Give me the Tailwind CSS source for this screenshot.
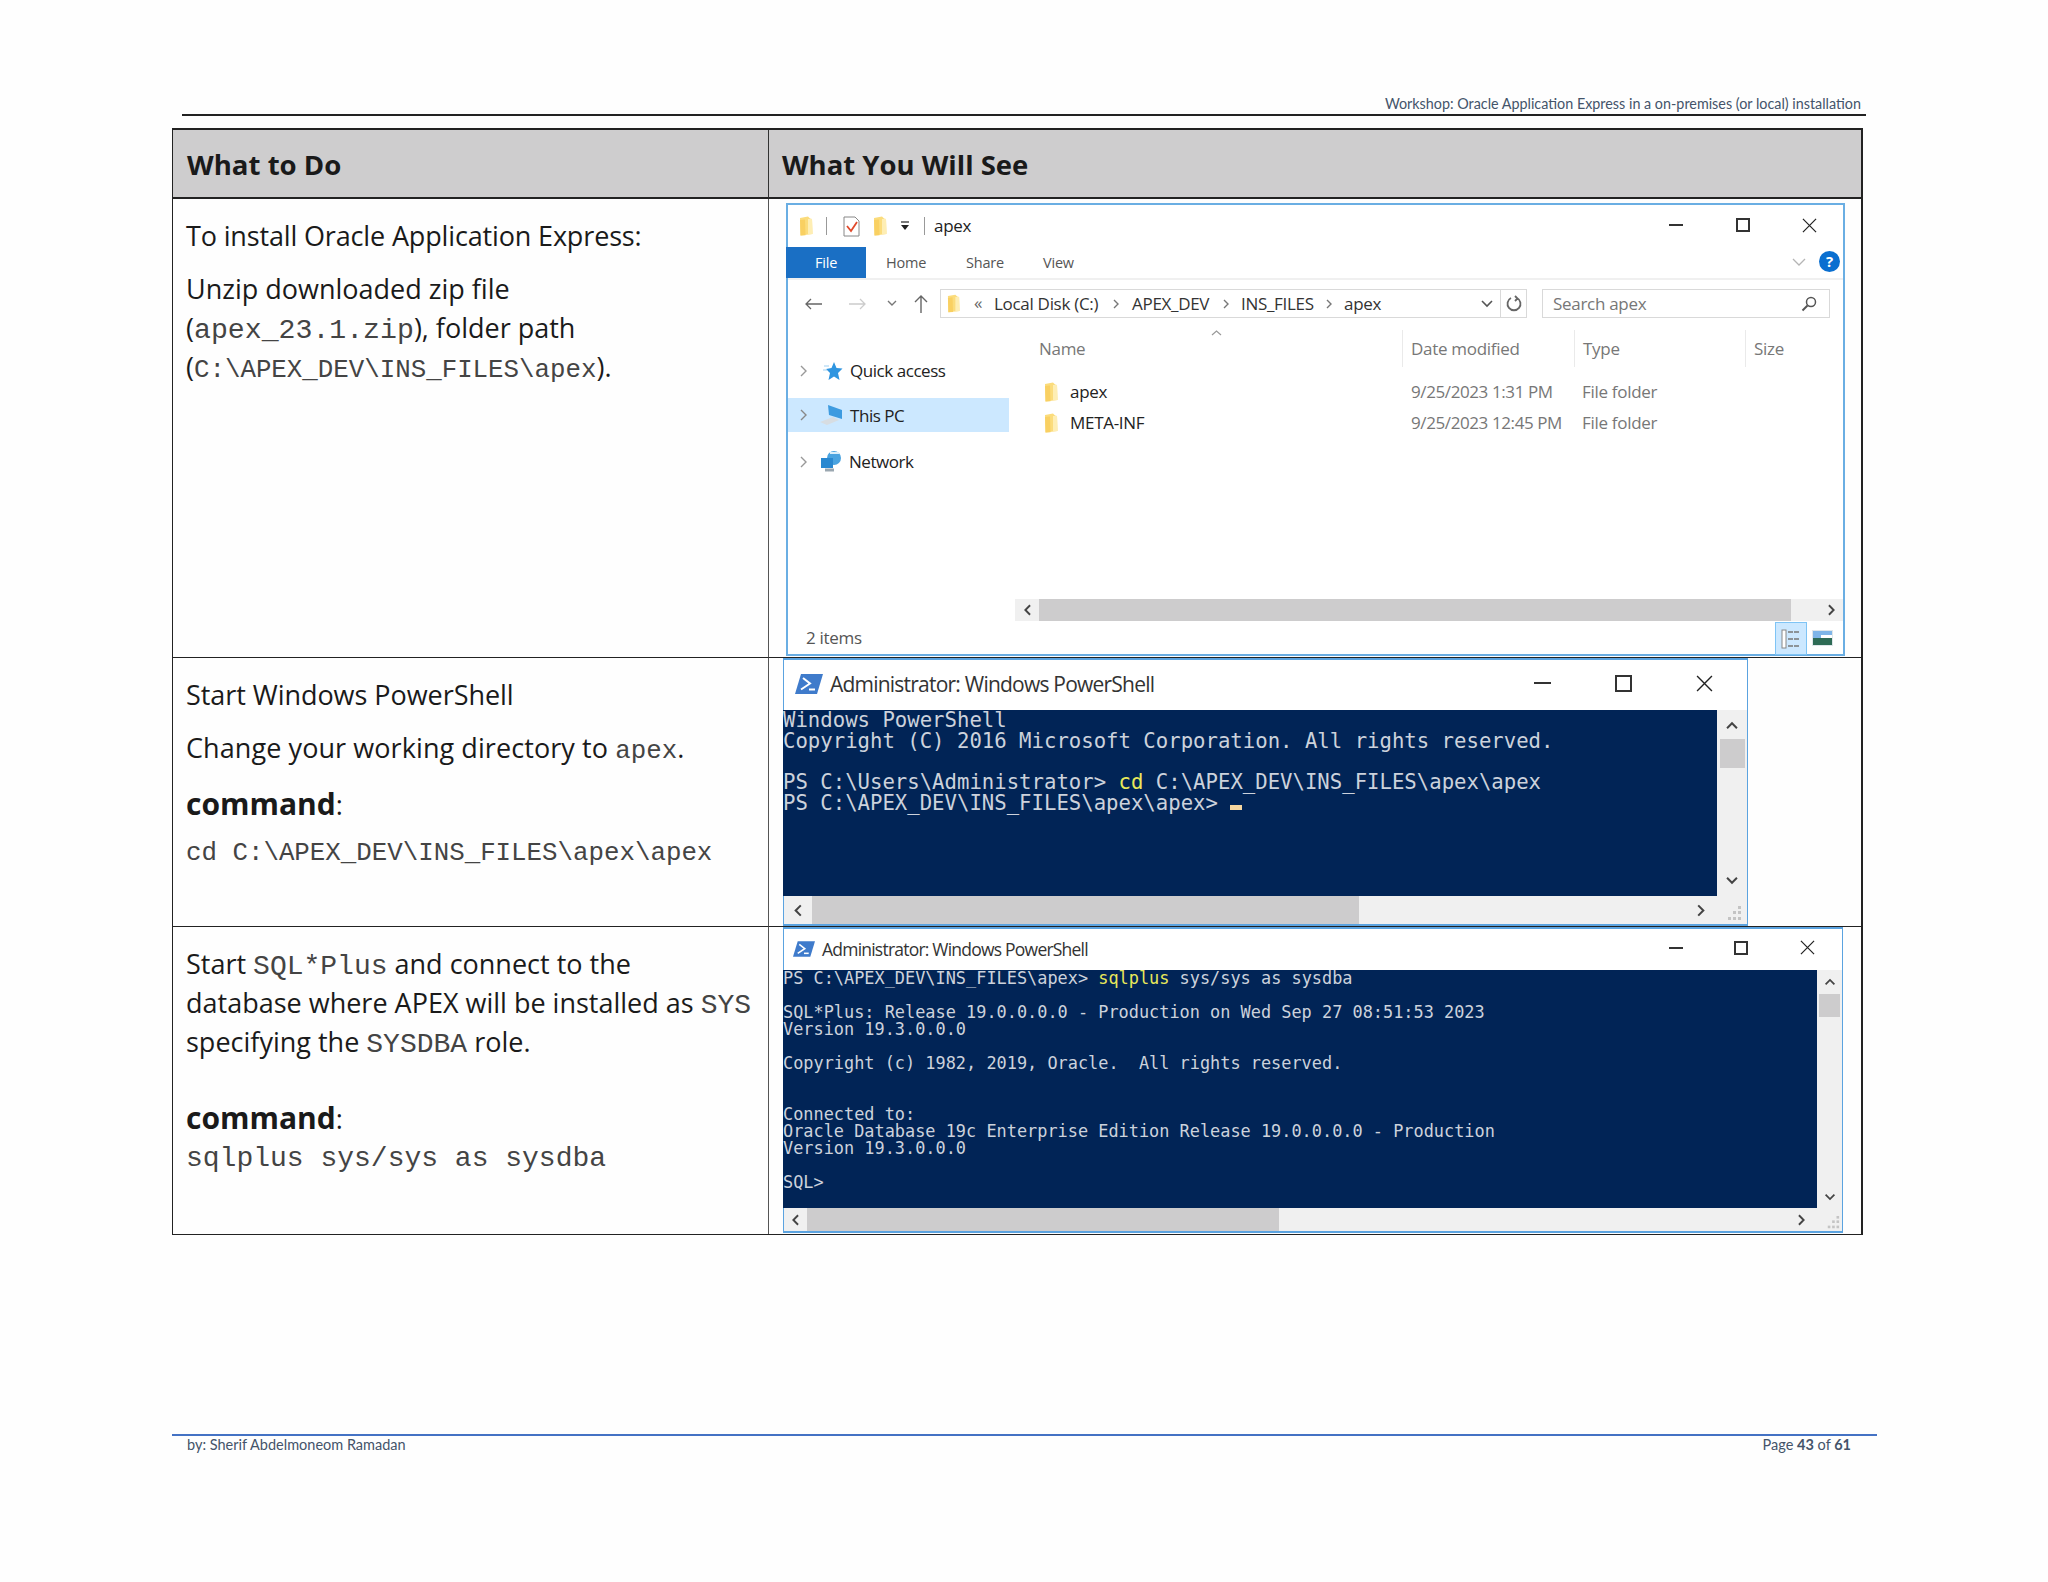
<!DOCTYPE html>
<html lang="en">
<head>
<meta charset="UTF-8">
<title>Workshop: Oracle Application Express</title>
<script src="https://cdn.jsdelivr.net/npm/@tailwindcss/browser@4"></script>
</head>
<body class="bg-[#fefefe] [font-family:'Open_Sans',sans-serif] text-[#1a1a1a]">
<svg class="hidden">
  <symbol id="folder" viewBox="0 0 14 20"><path d="M1 2 L9 0.5 L11 2.5 L13 3 L13.5 18 L1.5 19.5 Z" fill="#fbdc7c"/><path d="M1 4 L6 3.4 L6.5 19.2 L1.5 19.5 Z" fill="#f9d062"/><path d="M9 3 L13 3 L13.5 18 L9 18.6 Z" fill="#feeeb4"/></symbol>
  <symbol id="ps" viewBox="0 0 28 20"><path d="M6 0 H28 L22 20 H0 Z" fill="#3f7bcb"/><path d="M8 4 L15 9.5 L6 15.5" fill="none" stroke="#fff" stroke-width="2"/><path d="M14 15.5 H20" stroke="#fff" stroke-width="2"/></symbol>
  <symbol id="chev" viewBox="0 0 10 10"><path d="M3 1 L7 5 L3 9" fill="none" stroke="currentColor" stroke-width="1.4"/></symbol>
  <symbol id="close" viewBox="0 0 16 16"><path d="M1 1 L15 15 M15 1 L1 15" stroke="#222" stroke-width="1.3" fill="none"/></symbol>
  <symbol id="sleft" viewBox="0 0 10 14"><path d="M8 1.5 L2.5 7 L8 12.5" fill="none" stroke="#444" stroke-width="2.2"/></symbol>
  <symbol id="sright" viewBox="0 0 10 14"><path d="M2 1.5 L7.5 7 L2 12.5" fill="none" stroke="#444" stroke-width="2.2"/></symbol>
  <symbol id="sup" viewBox="0 0 14 10"><path d="M1.5 8 L7 2.5 L12.5 8" fill="none" stroke="#444" stroke-width="2.2"/></symbol>
  <symbol id="sdown" viewBox="0 0 14 10"><path d="M1.5 2 L7 7.5 L12.5 2" fill="none" stroke="#444" stroke-width="2.2"/></symbol>
  <symbol id="grip" viewBox="0 0 16 16" fill="#c4c4c4"><rect x="12" y="0" width="3" height="3"/><rect x="12" y="5" width="3" height="3"/><rect x="7" y="5" width="3" height="3"/><rect x="12" y="11" width="3" height="3"/><rect x="7" y="11" width="3" height="3"/><rect x="2" y="11" width="3" height="3"/></symbol>
</svg>

<div class="w-[2048px] h-[1582px] overflow-hidden">
  <!-- page header -->
  <div class="ml-[182px] pt-[94px]">
    <div class="w-[1684px] h-[22px] border-b-2 border-[#222] text-right pr-[5px] text-[14.35px] leading-[19px] text-[#44546a] [font-family:'Lato',sans-serif]">Workshop: Oracle Application Express in a on-premises (or local) installation</div>
  </div>

  <!-- table -->
  <div class="ml-[172px] mt-[12px] w-[1691px] h-[1107px] border-2 border-l border-b border-[#222] grid grid-cols-[596px_1fr] grid-rows-[69px_459px_269px_1fr] box-border">
    <div class="bg-[#cecdce] border-b-2 border-[#222] border-r border-r-[#333] pl-[14px] flex items-center text-[27.6px] font-bold pt-[3px]">What to Do</div>
    <div class="bg-[#cecdce] border-b-2 border-[#222] pl-[13px] flex items-center text-[27.5px] font-bold pt-[3px]">What You Will See</div>

    <!-- row 1 -->
    <div class="border-r border-r-[#555] border-b border-b-[#222] pl-[13px] pt-[17px] text-[27px] leading-[39px]">
      <p class="tracking-[-0.15px]">To install Oracle Application Express:</p>
      <p class="mt-[14px]">Unzip downloaded zip file<br>(<span class="leading-none [font-family:'Liberation_Mono',monospace] text-[28.2px] text-[#444]">apex_23.1.zip</span>), folder path<br>(<span class="leading-none [font-family:'Liberation_Mono',monospace] text-[25.8px] text-[#444]">C:\APEX_DEV\INS_FILES\apex</span>).</p>
    </div>
    <div class="border-b border-b-[#222] pl-[17px] pt-[4px]">
      <!-- explorer window -->
      <div class="w-[1059px] h-[453px] border-2 border-[#6aaee3] bg-white flex flex-col text-[#333]">
        <div class="h-[42px] flex items-center shrink-0">
          <svg class="w-[14px] h-[20px] ml-[11px]"><use href="#folder"/></svg>
          <div class="w-px h-[18px] bg-[#999] ml-[13px]"></div>
          <svg class="w-[17px] h-[21px] ml-[16px]" viewBox="0 0 17 21"><path d="M1 1 H12 L16 5 V20 H1 Z" fill="#fff" stroke="#888"/><path d="M4 10 L8 15 L14 6" fill="none" stroke="#e0492b" stroke-width="1.8"/></svg>
          <svg class="w-[14px] h-[20px] ml-[13px]"><use href="#folder"/></svg>
          <svg class="w-[10px] h-[10px] ml-[13px]" viewBox="0 0 10 10"><path d="M1 1 H9" stroke="#222" stroke-width="1.2"/><path d="M1 4 H9 L5 9 Z" fill="#222"/></svg>
          <div class="w-px h-[18px] bg-[#999] ml-[14px]"></div>
          <span class="ml-[9px] text-[17px] tracking-[-0.3px] text-[#222]">apex</span>
          <div class="ml-auto flex items-center mb-[2px]">
            <div class="w-[67px] flex justify-center"><div class="w-[14px] h-[2px] bg-[#333]"></div></div>
            <div class="w-[67px] flex justify-center"><div class="w-[14px] h-[14px] border-2 border-[#333]"></div></div>
            <div class="w-[67px] flex justify-center"><svg class="w-[15px] h-[15px]"><use href="#close"/></svg></div>
          </div>
        </div>
        <div class="h-[33px] shrink-0 flex border-b-2 border-[#f0f0f0] text-[14.5px] tracking-[-0.2px] text-[#555]">
          <div class="w-[80px] h-[31px] -ml-[2px] bg-[#1a6fc4] text-white flex items-center justify-center">File</div>
          <div class="ml-[20px] w-[80px] flex items-center">Home</div>
          <div class="w-[77px] flex items-center">Share</div>
          <div class="flex items-center">View</div>
          <div class="ml-auto flex items-center pb-[2px]">
            <svg class="w-[14px] h-[8px] mr-[3px]" viewBox="0 0 14 8"><path d="M1 1 L7 7 L13 1" fill="none" stroke="#b5b5b5" stroke-width="1.3"/></svg>
            <div class="ml-[10px] mr-[3px] w-[21px] h-[21px] rounded-full bg-[#0a6fd0] text-white text-[15px] font-bold flex items-center justify-center">?</div>
          </div>
        </div>
        <div class="h-[46px] shrink-0 pt-[9px] flex text-[17px] tracking-[-0.3px]">
          <div class="w-[52px] h-[29px] flex items-center justify-center"><svg class="w-[18px] h-[12px]" viewBox="0 0 18 12"><path d="M17 6 H1 M6 1 L1 6 L6 11" fill="none" stroke="#666" stroke-width="1.3"/></svg></div>
          <div class="w-[34px] h-[29px] flex items-center justify-center"><svg class="w-[18px] h-[12px]" viewBox="0 0 18 12"><path d="M1 6 H17 M12 1 L17 6 L12 11" fill="none" stroke="#ccc" stroke-width="1.3"/></svg></div>
          <div class="w-[36px] h-[29px] flex items-center justify-center"><svg class="w-[10px] h-[7px]" viewBox="0 0 10 7"><path d="M1 1 L5 5 L9 1" fill="none" stroke="#777" stroke-width="1.4"/></svg></div>
          <div class="w-[22px] h-[29px] flex items-center justify-center"><svg class="w-[14px] h-[18px]" viewBox="0 0 14 18"><path d="M7 18 V1 M1 7 L7 1 L13 7" fill="none" stroke="#666" stroke-width="1.4"/></svg></div>
          <div class="ml-[8px] w-[587px] h-[29px] border border-[#d9d9d9] flex items-center text-[#333]">
            <svg class="w-[13px] h-[19px] ml-[6px] shrink-0"><use href="#folder"/></svg>
            <span class="ml-[14px] w-[16px] text-[#666] leading-none pb-[3px]">«</span>
            <span class="ml-[4px] w-[113px]">Local Disk (C:)</span>
            <svg class="w-[18px] h-[10px] text-[#777]"><use href="#chev"/></svg>
            <span class="ml-[7px] w-[85px]">APEX_DEV</span>
            <svg class="w-[18px] h-[10px] text-[#777]"><use href="#chev"/></svg>
            <span class="ml-[6px] w-[79px]">INS_FILES</span>
            <svg class="w-[18px] h-[10px] text-[#777]"><use href="#chev"/></svg>
            <span class="ml-[6px]">apex</span>
            <svg class="w-[12px] h-[8px] ml-auto mr-[7px]" viewBox="0 0 12 8"><path d="M1 1 L6 6 L11 1" fill="none" stroke="#555" stroke-width="1.6"/></svg>
            <div class="w-[26px] h-full border-l border-[#d9d9d9] flex items-center justify-center"><svg class="w-[16px] h-[18px]" viewBox="0 0 16 18"><path d="M5 3 A6.5 6.5 0 1 0 11 3 M9 1 L11.5 3.5 L9 6" fill="none" stroke="#666" stroke-width="1.8"/></svg></div>
          </div>
          <div class="ml-[15px] w-[288px] h-[29px] border border-[#d9d9d9] flex items-center pl-[10px] text-[#777]">
            <span>Search apex</span>
            <svg class="w-[16px] h-[16px] ml-auto mr-[12px]" viewBox="0 0 16 16"><circle cx="10" cy="6" r="4.5" fill="none" stroke="#555" stroke-width="1.5"/><path d="M6.5 9.5 L1.5 14.5" stroke="#555" stroke-width="2"/></svg>
          </div>
        </div>
        <div class="h-[273px] shrink-0 flex text-[17px] tracking-[-0.3px]">
          <div class="w-[221px] pt-[28px] shrink-0 text-[#222] tracking-[-0.45px]">
            <div class="h-[34px] flex items-center">
              <svg class="w-[10px] h-[14px] ml-[11px] text-[#999]" viewBox="0 0 10 14"><path d="M2 2 L7 7 L2 12" fill="none" stroke="currentColor" stroke-width="1.4"/></svg>
              <svg class="w-[20px] h-[20px] ml-[14px]" viewBox="0 0 20 20"><path d="M11 1 L13.5 7 L19.5 7.5 L15 12 L16.5 19 L11 15.5 L5.5 19 L7 12 L3 8 L8.5 7 Z" fill="#2f95e0"/><path d="M1 5 H6 M0 9 H4" stroke="#9fd0f2" stroke-width="1.2"/></svg>
              <span class="ml-[7px]">Quick access</span>
            </div>
            <div class="h-[34px] mt-[10px] bg-[#cce8ff] flex items-center">
              <svg class="w-[10px] h-[14px] ml-[11px] text-[#888]" viewBox="0 0 10 14"><path d="M2 2 L7 7 L2 12" fill="none" stroke="currentColor" stroke-width="1.4"/></svg>
              <svg class="w-[24px] h-[22px] ml-[10px]" viewBox="0 0 24 22"><path d="M9 1 L23 6 V15 L10 11 Z" fill="#3d9be0"/><path d="M1 18 L14 13 L20 16 L8 21 Z" fill="#d7dde2"/></svg>
              <span class="ml-[7px] pt-[2px]">This PC</span>
            </div>
            <div class="h-[34px] mt-[13px] flex items-center">
              <svg class="w-[10px] h-[14px] ml-[11px] text-[#999]" viewBox="0 0 10 14"><path d="M2 2 L7 7 L2 12" fill="none" stroke="currentColor" stroke-width="1.4"/></svg>
              <svg class="w-[22px] h-[24px] ml-[11px]" viewBox="0 0 22 24"><circle cx="14" cy="8" r="7" fill="#4aa3e0"/><rect x="1" y="8" width="12" height="10" fill="#2a88d0"/><path d="M5 20 H14" stroke="#9aa7b0" stroke-width="3"/><path d="M10 3 H19" stroke="#dbeefa" stroke-width="2"/></svg>
              <span class="ml-[7px]">Network</span>
            </div>
          </div>
          <div class="flex-1 relative">
            <svg class="absolute left-[202px] top-[4px] w-[11px] h-[6px]" viewBox="0 0 11 6"><path d="M1 5 L5.5 1 L10 5" fill="none" stroke="#999" stroke-width="1.2"/></svg>
            <div class="mt-[4px] h-[37px] grid grid-cols-[393px_172px_171px_1fr] text-[#777]">
              <div class="pl-[30px] flex items-center">Name</div>
              <div class="pl-[8px] border-l border-[#eaeaea] flex items-center">Date modified</div>
              <div class="pl-[8px] border-l border-[#eaeaea] flex items-center">Type</div>
              <div class="pl-[8px] border-l border-[#eaeaea] flex items-center">Size</div>
            </div>
            <div class="mt-[9px] h-[31px] grid grid-cols-[393px_172px_171px_1fr] items-center text-[#777]">
              <div class="pl-[35px] flex items-center text-[#222]"><svg class="w-[14px] h-[20px]"><use href="#folder"/></svg><span class="ml-[12px]">apex</span></div>
              <div class="pl-[9px] whitespace-nowrap tracking-[-0.4px]">9/25/2023 1:31 PM</div>
              <div class="pl-[8px]">File folder</div>
            </div>
            <div class="h-[31px] grid grid-cols-[393px_172px_171px_1fr] items-center text-[#777]">
              <div class="pl-[35px] flex items-center text-[#222]"><svg class="w-[14px] h-[20px]"><use href="#folder"/></svg><span class="ml-[12px]">META-INF</span></div>
              <div class="pl-[9px] whitespace-nowrap tracking-[-0.4px]">9/25/2023 12:45 PM</div>
              <div class="pl-[8px]">File folder</div>
            </div>
          </div>
        </div>
        <div class="h-[22px] shrink-0 ml-[227px] bg-[#f0f0f0] flex items-center">
          <div class="w-[24px] flex justify-center"><svg class="w-[9px] h-[12px]"><use href="#sleft"/></svg></div>
          <div class="w-[752px] h-full bg-[#cdcccd]"></div>
          <div class="flex-1 flex justify-end pr-[7px]"><svg class="w-[9px] h-[12px]"><use href="#sright"/></svg></div>
        </div>
        <div class="flex-1 flex items-center text-[17px] tracking-[-0.3px] text-[#555] pl-[18px] relative">
          <span>2 items</span>
          <div class="absolute left-[987px] top-px w-[32px] h-[33px] bg-[#cce8ff] border border-[#7fc4f5] flex items-center justify-center">
            <svg class="w-[20px] h-[20px]" viewBox="0 0 20 20"><rect x="1" y="1" width="4" height="18" fill="#fff" stroke="#888"/><path d="M7 3 H19 M7 10 H19 M7 17 H19" stroke="#777" stroke-width="1.5" stroke-dasharray="5 1"/></svg>
          </div>
          <svg class="absolute left-[1024px] top-[9px] w-[21px] h-[16px]" viewBox="0 0 21 16"><rect width="21" height="16" fill="#dfe6ea"/><rect x="1" y="1" width="19" height="14" fill="#7fb5e8"/><rect x="1" y="8" width="19" height="7" fill="#2e6b55"/><rect x="9" y="5" width="11" height="3" fill="#fff"/></svg>
        </div>
      </div>
    </div>

    <!-- row 2 -->
    <div class="border-r border-r-[#555] border-b border-b-[#222] pl-[13px] pt-[17px] text-[27px] leading-[39px]">
      <p class="tracking-[-0.05px]">Start Windows PowerShell</p>
      <p class="mt-[14px] tracking-[0.08px]">Change your working directory to <span class="leading-none [font-family:'Liberation_Mono',monospace] text-[25.8px] tracking-normal text-[#444]">apex</span>.</p>
      <p class="mt-[18px]"><strong class="leading-none text-[30px] font-bold">command</strong>:</p>
      <p class="mt-[10px] [font-family:'Liberation_Mono',monospace] text-[25.8px] text-[#444]">cd C:\APEX_DEV\INS_FILES\apex\apex</p>
    </div>
    <div class="border-b border-b-[#222] pl-[14px]">
      <div class="w-[965px] h-[268px] border border-[#5ba3e0] border-y-2 bg-white flex flex-col">
        <div class="h-[50px] shrink-0 flex items-center">
          <svg class="w-[28px] h-[20px] ml-[11px] mb-[2px]"><use href="#ps"/></svg>
          <span class="ml-[7px] text-[21px] tracking-[-0.78px] text-[#333]">Administrator: Windows PowerShell</span>
          <div class="ml-auto flex items-center mb-[4px]">
            <div class="w-[81px] flex justify-center"><div class="w-[17px] h-[2px] bg-[#333]"></div></div>
            <div class="w-[81px] flex justify-center"><div class="w-[17px] h-[17px] border-2 border-[#333]"></div></div>
            <div class="w-[83px] pr-[2px] flex justify-center"><svg class="w-[17px] h-[17px]"><use href="#close"/></svg></div>
          </div>
        </div>
        <div class="h-[186px] shrink-0 flex">
          <pre class="-ml-px w-[934px] bg-[#012456] text-[#ccd2dc] [font-family:'DejaVu_Sans_Mono',monospace] text-[20.65px] leading-[20.75px] overflow-hidden">Windows PowerShell
Copyright (C) 2016 Microsoft Corporation. All rights reserved.

PS C:\Users\Administrator&gt; <span class="text-[#e8e85a]">cd</span> C:\APEX_DEV\INS_FILES\apex\apex
PS C:\APEX_DEV\INS_FILES\apex\apex&gt; <span class="inline-block w-[12px] h-[5px] bg-[#f6d7a0]"></span></pre>
          <div class="flex-1 bg-[#f0f0f0] flex flex-col items-center pt-[11px]">
            <svg class="w-[14px] h-[9px]"><use href="#sup"/></svg>
            <div class="w-[25px] h-[29px] bg-[#cdcccd] mt-[9px]"></div>
            <svg class="w-[14px] h-[9px] mt-[108px]"><use href="#sdown"/></svg>
          </div>
        </div>
        <div class="flex-1 bg-[#f0f0f0] flex items-center">
          <div class="w-[28px] flex justify-center"><svg class="w-[10px] h-[13px]"><use href="#sleft"/></svg></div>
          <div class="w-[547px] h-full bg-[#cdcccd]"></div>
          <div class="flex-1 flex justify-end items-center pr-[5px]">
            <svg class="w-[10px] h-[13px] mr-[20px]"><use href="#sright"/></svg>
            <svg class="w-[16px] h-[16px] mt-[8px]"><use href="#grip"/></svg>
          </div>
        </div>
      </div>
    </div>

    <!-- row 3 -->
    <div class="border-r border-r-[#555] pl-[13px] pt-[17px] text-[27px] leading-[39px]">
      <p>Start <span class="leading-none [font-family:'Liberation_Mono',monospace] text-[28px] text-[#444]">SQL*Plus</span> and connect to the<br>database where APEX will be installed as <span class="leading-none [font-family:'Liberation_Mono',monospace] text-[28px] text-[#444]">SYS</span><br>specifying the <span class="leading-none [font-family:'Liberation_Mono',monospace] text-[28px] text-[#444]">SYSDBA</span> role.</p>
      <p class="mt-[38px]"><strong class="leading-none text-[30px] font-bold">command</strong>:</p>
      <p class="mt-px [font-family:'Liberation_Mono',monospace] text-[28px] text-[#444]">sqlplus sys/sys as sysdba</p>
    </div>
    <div class="pl-[14px]">
      <div class="w-[1060px] h-[306px] border border-[#5ba3e0] border-y-2 bg-white flex flex-col">
        <div class="h-[41px] shrink-0 flex items-center">
          <svg class="w-[22px] h-[16px] ml-[9px] mb-[2px]"><use href="#ps"/></svg>
          <span class="ml-[7px] text-[17.5px] tracking-[-0.78px] text-[#333]">Administrator: Windows PowerShell</span>
          <div class="ml-auto flex items-center mb-[4px]">
            <div class="w-[65px] flex justify-center"><div class="w-[14px] h-[2px] bg-[#333]"></div></div>
            <div class="w-[66px] flex justify-center"><div class="w-[14px] h-[14px] border-2 border-[#333]"></div></div>
            <div class="w-[68px] pr-[2px] flex justify-center"><svg class="w-[15px] h-[15px]"><use href="#close"/></svg></div>
          </div>
        </div>
        <div class="h-[238px] shrink-0 flex">
          <pre class="-ml-px w-[1034px] bg-[#012456] text-[#ccd2dc] [font-family:'DejaVu_Sans_Mono',monospace] text-[16.9px] leading-[17px] overflow-hidden">PS C:\APEX_DEV\INS_FILES\apex&gt; <span class="text-[#e8e85a]">sqlplus</span> sys/sys as sysdba

SQL*Plus: Release 19.0.0.0.0 - Production on Wed Sep 27 08:51:53 2023
Version 19.3.0.0.0

Copyright (c) 1982, 2019, Oracle.  All rights reserved.


Connected to:
Oracle Database 19c Enterprise Edition Release 19.0.0.0.0 - Production
Version 19.3.0.0.0

SQL&gt;</pre>
          <div class="flex-1 bg-[#f0f0f0] flex flex-col items-center pt-[8px]">
            <svg class="w-[12px] h-[8px]"><use href="#sup"/></svg>
            <div class="w-[21px] h-[23px] bg-[#cdcccd] mt-[8px]"></div>
            <svg class="w-[12px] h-[8px] mt-[176px]"><use href="#sdown"/></svg>
          </div>
        </div>
        <div class="flex-1 bg-[#f0f0f0] flex items-center">
          <div class="w-[23px] flex justify-center"><svg class="w-[9px] h-[12px]"><use href="#sleft"/></svg></div>
          <div class="w-[472px] h-full bg-[#cdcccd]"></div>
          <div class="flex-1 flex justify-end items-center pr-[2px]">
            <svg class="w-[9px] h-[12px] mr-[20px]"><use href="#sright"/></svg>
            <svg class="w-[14px] h-[14px] mt-[6px]"><use href="#grip"/></svg>
          </div>
        </div>
      </div>
    </div>
  </div>

  <!-- page footer -->
  <div class="ml-[172px] mt-[199px] w-[1705px] border-t-2 border-[#4472c4] flex justify-between pl-[15px] pr-[26px] text-[14.5px] leading-[18px] text-[#44546a] [font-family:'Lato',sans-serif]">
    <span>by: Sherif Abdelmoneom Ramadan</span>
    <span>Page <b>43</b> of <b>61</b></span>
  </div>
</div>
</body>
</html>
